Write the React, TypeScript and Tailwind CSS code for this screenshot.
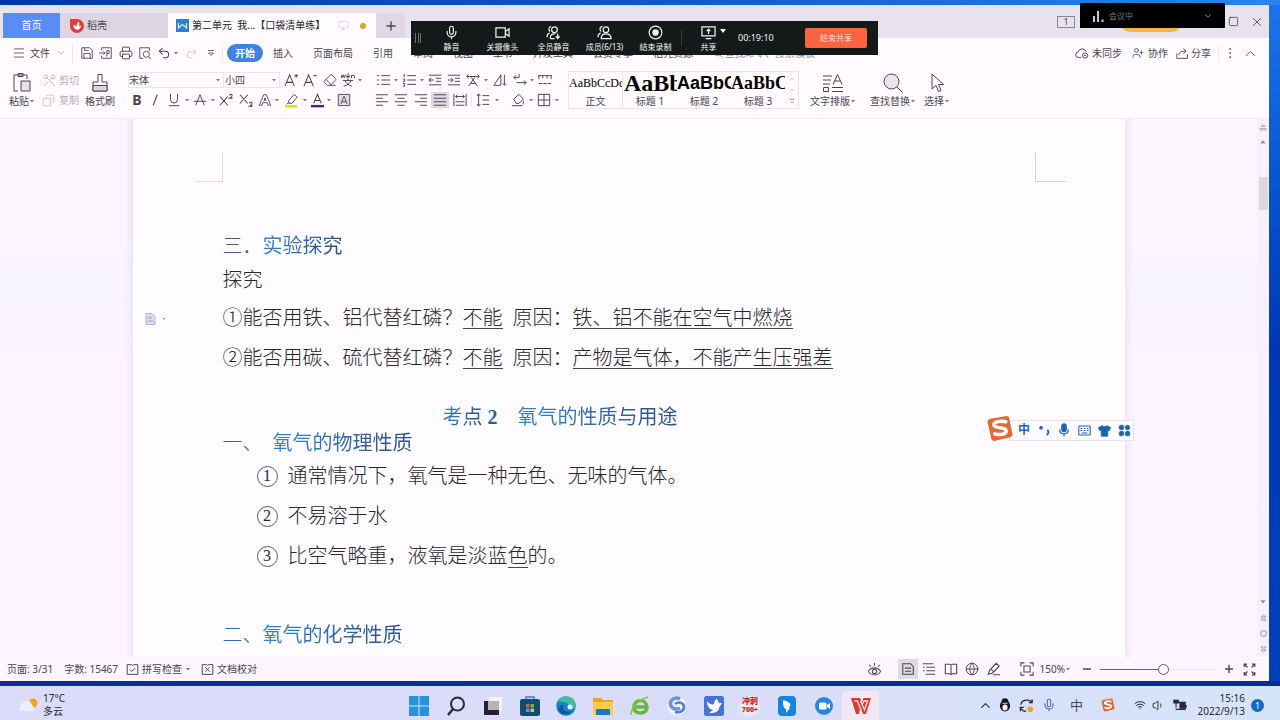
import React, { type ReactNode } from "react";
import {
  Printer, Undo2, Redo2, Scissors, Copy, Eraser, Mic, Video, Users, ChevronDown, ChevronUp,
  Search, Square, X, Plus, Minus, EllipsisVertical, UserPlus,
  Globe, Wifi, Volume1, Menu, Monitor,
} from "lucide-react";

const UI = "font-['Noto_Sans','Noto_Sans_CJK_SC',sans-serif]";

type IconProps = { children: ReactNode; className?: string; box?: string; sw?: number };

function Icon({ children, className = "size-[15px]", box = "0 0 16 16", sw = 1 }: IconProps) {
  return (
    <svg viewBox={box} className={`shrink-0 ${className}`} fill="none" stroke="currentColor" strokeWidth={sw} aria-hidden="true">
      {children}
    </svg>
  );
}

function Caret({ className = "w-[6px]" }: { className?: string }) {
  return (
    <span className={`flex shrink-0 items-center justify-center ${className}`}>
      <svg viewBox="0 0 4 3" className="h-[3px] w-[4px]" aria-hidden="true"><path d="M0 0h4L2 2.6z" fill="#7d7784" /></svg>
    </span>
  );
}

function Tool({ label, className, children }: { label: string; className: string; children: ReactNode }) {
  return (
    <button type="button" aria-label={label} className={`flex h-4 shrink-0 items-center justify-center ${className}`}>
      {children}
    </button>
  );
}

function TitleBar() {
  return (
    <div className="flex h-[33px] items-end bg-[#e7e2ee] pl-[3px]">
      <button type="button" className="h-[25px] w-[57px] bg-[#5b8bf6] text-[10px] text-white">首页</button>
      <button type="button" className="flex h-[25px] w-[108px] items-center gap-[3px] bg-[#ddd6e2] pl-2.5 text-[10px]">
        <svg viewBox="0 0 14 14" className="size-[14px]" aria-hidden="true">
          <path d="M0 0h7a7 7 0 1 1-7 7z" fill="#e23b3b" />
          <path d="M7 11C4 10 3 8 3.500 5.500 5 6 6 7 6.500 8 6.500 5.500 7.500 3.500 9 2.500c.6 2 .5 3.500-.4 5 .8-.6 1.500-1 2.400-1-.2 2.500-1.500 4-4 4.500z" fill="#fff" />
        </svg>
        稻壳
      </button>
      <div className="flex h-[25px] w-[208px] items-center bg-[#fffbff] pr-2.5 pl-2 text-[10px] text-[#25202b]">
        <svg viewBox="0 0 13 13" className="mr-[3px] size-[13px]" aria-hidden="true">
          <path d="M0 0h13v13H0z" fill="#2e7fd9" />
          <path d="M2.500 4v5l4-3.500 4 3.500V4" fill="none" stroke="#d9ecff" strokeWidth="1.200" />
        </svg>
        <span className="whitespace-pre">第二单元  我...【口袋清单练】</span>
        <Monitor className="ml-auto size-[11px] text-[#cfc8d6]" strokeWidth={1.5} />
        <span className="ml-[11px] size-[6px] rounded-full bg-[#d9a03c]" />
      </div>
      <button type="button" aria-label="新建标签" className="flex h-[25px] w-[29px] items-center justify-center bg-[#dfd9e6]">
        <Plus className="size-[14px]" strokeWidth={2.4} />
      </button>
      <div className="ml-auto flex h-[33px] items-center">
        <span className="flex h-3 w-[18px] items-center justify-center border border-[#8a8492] text-[9px] leading-none">1</span>
        <button type="button" aria-label="登录" className="mt-[2px] mr-[40px] ml-[46px] h-[18px] w-[60px] rounded-full bg-[#f4b64c]" />
        <button type="button" aria-label="还原" className="flex w-6 justify-center"><Square className="size-[11px]" strokeWidth={1.8} /></button>
        <button type="button" aria-label="关闭" className="flex w-6 justify-center"><X className="size-[14px]" strokeWidth={1.5} /></button>
      </div>
    </div>
  );
}

function MenuRow() {
  return (
    <nav className="flex h-[30px] items-center text-[10px] whitespace-nowrap">
      <button type="button" className="ml-3 flex items-center gap-1">
        <Menu className="size-[14px]" strokeWidth={1.4} />文件
        <ChevronDown className="ml-[2px] size-[10px] text-[#a9a2b0]" strokeWidth={1.8} />
      </button>
      <span className="ml-[6px] h-5 w-px bg-[#eee6f0]" />
      <div className="ml-[5px] flex items-center">
        <Tool label="保存" className="w-[18px]"><Icon className="size-[14px]"><path d="M2 2h9l3 3v9H2zM4.500 14V8.500h7V14M5 2v3h5" /></Icon></Tool>
        <Tool label="输出为PDF" className="w-[20px]"><Icon className="size-[14px]"><path d="M3 5V2h11v12H3v-3M0 8h7M5 6l2 2-2 2M9 12V5h2.500v3.500H9" /></Icon></Tool>
        <Tool label="打印" className="w-[19px]"><Printer className="size-[14px]" strokeWidth={1.6} /></Tool>
        <Tool label="打印预览" className="w-[20px]"><Icon className="size-[14px]"><path d="M6 14H2V2h11v4" /><circle cx="9.500" cy="9.500" r="3.500" /><path d="m12 12 2.500 3" /></Icon></Tool>
        <Tool label="撤销" className="w-[18px]"><Undo2 className="size-[14px]" strokeWidth={1.8} /></Tool>
        <Caret />
        <Tool label="恢复" className="w-[24px] text-[#cfc8d2]"><Redo2 className="size-[13px]" strokeWidth={1.8} /></Tool>
        <Tool label="自定义快速访问" className="w-[16px]"><Icon className="size-[8px]" sw={1.6}><path d="M2 3h12M3 8l5 5 5-5z" /></Icon></Tool>
      </div>
      <span className="ml-[3px] h-5 w-px bg-[#eee6f0]" />
      <button type="button" className="ml-1 h-[18px] w-9 rounded-full bg-[#4082e2] font-bold text-white">开始</button>
      <div className="ml-2.5 flex items-center gap-5">
        <button type="button">插入</button>
        <button type="button">页面布局</button>
        <button type="button">引用</button>
        <button type="button">审阅</button>
        <button type="button">视图</button>
        <button type="button">章节</button>
        <button type="button">开发工具</button>
        <button type="button">会员专享</button>
        <button type="button">稻壳资源</button>
        <button type="button" className="flex items-center gap-[2px] text-[#8e8795]"><Search className="size-[10px]" />查找命令、搜索模板</button>
      </div>
      <div className="ml-auto flex items-center pr-2.5">
        <button type="button" className="flex items-center gap-[3px]">
          <Icon className="size-[14px]" sw={1.1}><path d="M7 13H4a3 3 0 0 1-.5-6A5 5 0 0 1 13 6.500" /><circle cx="11.500" cy="11" r="3" /><path d="M10 11h3" /></Icon>未同步
        </button>
        <button type="button" className="ml-2.5 flex items-center gap-1"><UserPlus className="size-[12px]" strokeWidth={1.5} />协作</button>
        <button type="button" className="ml-2 flex items-center gap-[2px]">
          <Icon className="size-[13px]" sw={1.1}><path d="M1 8v6h13V9M3 10c1-4 4-5 9-5M9 2l3.500 3L9 8" /></Icon>分享
        </button>
        <span className="ml-[7px] h-4 w-px bg-[#eee6f0]" />
        <EllipsisVertical className="ml-1 size-[14px]" strokeWidth={1.2} />
        <ChevronUp className="ml-[5px] size-[17px]" strokeWidth={1.2} />
      </div>
    </nav>
  );
}

function Lines({ d }: { d: string }) {
  return <Icon className="size-[14px]" sw={1.1}><path d={d} /></Icon>;
}

function StyleCard({ sample, name, className, active }: { sample: string; name: string; className: string; active?: boolean }) {
  return (
    <button type="button" className={`flex h-full w-[54px] shrink-0 flex-col items-center overflow-hidden ${active ? "border-r border-[#eadff0]" : ""}`}>
      <span className={`flex h-[23px] w-full items-center overflow-hidden whitespace-nowrap text-black ${className}`}>{sample}</span>
      <span className="text-[10px] leading-[14px]">{name}</span>
    </button>
  );
}

function Ribbon() {
  return (
    <div className="flex h-[50px] items-start text-[10px] whitespace-nowrap">
      <button type="button" className="ml-2 flex w-7 flex-col items-center pt-1">
        <Icon className="size-[22px]" box="0 0 22 22"><path d="M7 19H3V3h13v4M7 1.500h5v3H7z" /><path d="M10 9h9v10h-9z" fill="#e5e1ea" /></Icon>
        <span className="flex items-center leading-[15px]">粘贴<Caret /></span>
      </button>
      <div className="ml-[6px] flex w-[38px] flex-col text-[#b3acb8]">
        <button type="button" className="flex h-5 items-center gap-[2px] pt-1"><Scissors className="size-[15px] rotate-90" strokeWidth={1.2} />剪切</button>
        <button type="button" className="mt-[2px] flex h-5 items-center gap-1"><Copy className="size-[13px] rotate-90" strokeWidth={1.2} />复制</button>
      </div>
      <button type="button" className="ml-1 flex w-8 flex-col items-center pt-1">
        <Icon className="size-[22px]" box="0 0 22 22"><path d="M9 10V2.500h4V10h5v9H4v-9z" /><path d="M4 13.500h14V19H4z" fill="#dad6e0" /></Icon>
        <span className="leading-[15px]">格式刷</span>
      </button>

      <div className="ml-3 flex w-[236px] flex-col gap-1 pt-1">
        <div className="flex items-center">
          <div className="flex h-4 w-[152px] border border-[#eee3f2]">
            <label className="relative flex w-[94px] items-center">
              <select aria-label="字体" className="w-full appearance-none bg-transparent text-[10px] leading-[14px] outline-none"><option>宋体</option></select>
              <span className="pointer-events-none absolute right-[2px]"><Caret /></span>
            </label>
            <label className="relative flex flex-1 items-center border-l border-[#eee3f2]">
              <select aria-label="字号" className="w-full appearance-none bg-transparent pl-px text-[10px] leading-[14px] outline-none"><option>小四</option></select>
              <span className="pointer-events-none absolute right-[2px]"><Caret /></span>
            </label>
          </div>
          <Tool label="增大字号" className="ml-[2px] w-[18px]"><Icon className="size-[15px]" sw={1.1}><path d="M1 14 6 2l5 12M3 10h6M11 3h4M13 1v4" /></Icon></Tool>
          <Tool label="减小字号" className="w-5"><Icon className="size-[15px]" sw={1.1}><path d="M1 14 6 2l5 12M3 10h6M11 3h4" /></Icon></Tool>
          <Tool label="清除格式" className="w-5"><Eraser className="size-[14px]" strokeWidth={1.6} /></Tool>
          <Tool label="拼音指南" className="w-4">
            <Icon className="size-[14px]" sw={1.1}><path d="M0 2l1.200 3.500L2.500 2l1.200 3.500L5 2M6.500 4h3.200c0-2.600-3.200-2.600-3.200 0 0 2 2 2 3 1.300M8 1l1-1M12 6V2.500M12 4c0-2 3.500-2 3.500 0v2M2 8.500h12M8 7v1.500M4.500 8.500c1 3 4 5.500 8 6.500M11.500 8.500c-1 3-4 5.500-8.500 6.500" /></Icon>
          </Tool>
          <Caret className="w-2" />
        </div>
        <div className="flex items-center">
          <Tool label="加粗" className="w-[18px]"><b className="text-[14px] leading-none">B</b></Tool>
          <Tool label="倾斜" className="w-[18px]"><Icon className="size-[14px]" sw={1.2}><path d="M10.500 2 6 14" /></Icon></Tool>
          <Tool label="下划线" className="w-5"><Icon className="size-[14px]" sw={1.1}><path d="M4 1v6.500a4 4 0 0 0 8 0V1M2 14.500h12" /></Icon></Tool>
          <Caret />
          <Tool label="删除线" className="w-5"><Icon className="size-[14px]" sw={1.1}><path d="M3 14 8 2l5 12M1 9.500h14" /></Icon></Tool>
          <Caret />
          <Tool label="上标" className="w-5"><Icon className="size-[14px]" sw={1.2}><path d="M1 4l9 10M10 4 1 14M12 3c0-2 3-2 3 0 0 1.200-3 3-3 3h3.500" /></Icon></Tool>
          <Tool label="下标" className="w-5"><Icon className="size-[14px]" sw={1.2}><path d="M1 2l9 10M10 2 1 12M12 12c0-2 3-2 3 0 0 1.200-3 3-3 3h3.500" /></Icon></Tool>
          <Tool label="文字效果" className="w-[18px]"><Icon className="size-[14px]"><path d="M1.500 14 6.500 2h3l5 12h-3l-1-3h-5l-1 3zM7 8.500h2L8 5.500z" /></Icon></Tool>
          <Caret />
          <Tool label="突出显示" className="w-[22px]"><Icon className="size-[15px]"><path d="M5 8 11 1.500l3 3L8.500 11H5zM3 12l2-2" /><path d="M1 14.200h13" stroke="#e2dc35" strokeWidth="3" /></Icon></Tool>
          <Caret />
          <Tool label="字体颜色" className="w-[18px]"><Icon className="size-[15px]" sw={1.1}><path d="M4 11 8 1.500 12 11M5.500 8h5" /><path d="M1 14h14" stroke="#2f2a86" strokeWidth="2.600" /></Icon></Tool>
          <Caret />
          <Tool label="字符底纹" className="w-6"><Icon className="size-[14px]"><path d="M1.500 1.500h13v13h-13z" fill="#dedae4" /><path d="M4.500 12.500 8 3.500l3.500 9M5.500 10h5" /></Icon></Tool>
        </div>
      </div>

      <div className="ml-[9px] flex w-[187px] flex-col gap-1 pt-1">
        <div className="flex items-center">
          <Tool label="项目符号" className="w-5"><Lines d="M6 3h10M6 8h10M6 13h10M1 3h2.500M1 8h2.500M1 13h2.500" /></Tool>
          <Caret />
          <Tool label="编号" className="w-5"><Lines d="M6 3h10M6 8h10M6 13h10M2.500 1v4M1 7h2v2.500H1M1 12h2v3H1" /></Tool>
          <Caret />
          <Tool label="减少缩进" className="w-5"><Lines d="M1 2.500h14M9 6h6M9 9.500h6M1 13.500h14M7 8H1M3.500 5.500 1 8l2.500 2.500" /></Tool>
          <Tool label="增加缩进" className="w-[18px]"><Lines d="M1 2.500h14M9 6h6M9 9.500h6M1 13.500h14M1 8h6M4.500 5.500 7 8l-2.500 2.500" /></Tool>
          <Tool label="中文版式" className="w-5"><Lines d="M1 4h14M3 1.500 .8 4 3 6M13 1.500 15.200 4 13 6M3 15l7-10M13 15 6 5M5 12h6" /></Tool>
          <Caret />
          <Tool label="排序" className="w-[22px]"><Lines d="M1 14 9 2v12zM13 2v12M11 12l2 2 2-2" /></Tool>
          <Tool label="显示标记" className="w-[18px]"><Lines d="M7 1v4H1M3.500 2.500 1 5l2.500 2.500M4 11h11M12.500 8.500 15 11l-2.500 2.500" /></Tool>
          <Caret />
          <Tool label="制表位" className="w-5"><Lines d="M0 3h16M1 3v4M5.500 3v3M10.500 3v3M15 3v4M1 12h4M6 12h4M11 12h4" /></Tool>
        </div>
        <div className="flex items-center">
          <Tool label="左对齐" className="w-[18px]"><Lines d="M1 2h14M1 6h8M1 10h14M1 14h8" /></Tool>
          <Tool label="居中" className="w-5"><Lines d="M1 2h14M4 6h8M1 10h14M4 14h8" /></Tool>
          <Tool label="右对齐" className="w-5"><Lines d="M1 2h14M7 6h8M1 10h14M7 14h8" /></Tool>
          <Tool label="两端对齐" className="w-[18px] bg-[#dcd7e2]"><Lines d="M1 2h14M1 6h14M1 10h14M1 14h14" /></Tool>
          <Tool label="分散对齐" className="w-[22px]"><Lines d="M1 1v14M15 1v14M3 4h10M3 10h10M3 14h10M5 2 3 4l2 2M11 2l2 2-2 2" /></Tool>
          <span className="h-3 w-px bg-[#eee3f2]" />
          <Tool label="行距" className="w-[22px]"><Lines d="M3 1v14M1 3.500 3 1l2 2.500M1 12.500 3 15l2-2.500M7.500 3H15M7.500 8H15M7.500 13H15" /></Tool>
          <Caret />
          <Tool label="底纹颜色" className="ml-2 w-5"><Lines d="M3 7 9 1.500 14 7l-5 5H6zM1 14.500h12M14 9v4" /></Tool>
          <Caret />
          <Tool label="边框" className="w-5"><Lines d="M1.500 1.500h13v13h-13zM8 1.500v13M1.500 8h13" /></Tool>
          <Caret />
        </div>
      </div>

      <div className="mt-[3px] ml-2 flex h-[38px] w-[231px] border border-[#eee3f2]">
        <StyleCard sample="AaBbCcDd" name="正文" active className="font-['Liberation_Serif',serif] text-[12px]" />
        <StyleCard sample="AaBb" name="标题 1" className="pl-px font-['Liberation_Serif',serif] text-[24px] font-bold" />
        <StyleCard sample="AaBbC" name="标题 2" className="font-['Liberation_Sans',sans-serif] text-[18px] font-bold" />
        <StyleCard sample="AaBbC" name="标题 3" className="font-['Liberation_Serif',serif] text-[18px] font-bold" />
        <div className="flex flex-1 flex-col items-center justify-around py-[2px] text-[#8e8795]">
          <ChevronUp className="size-[6px]" /><ChevronDown className="size-[6px]" />
          <Icon className="size-[6px]" sw={2}><path d="M2 4h12M3 9l5 4 5-4" /></Icon>
        </div>
      </div>

      <button type="button" className="ml-2.5 flex w-[48px] flex-col items-center pt-1">
        <Icon className="size-[22px]" box="0 0 22 22"><path d="M1 4h9M1 8h8M1 12h7M1.500 15.500h5v4h-5zM10 15.500h11M10 19.500h11M11 12.500l4.500-10 4.500 10M12.500 9h6" /></Icon>
        <span className="flex items-center leading-[15px]">文字排版<Caret /></span>
      </button>
      <button type="button" className="ml-[11px] flex w-[50px] flex-col items-center pt-1">
        <Icon className="size-[22px]" box="0 0 22 22"><circle cx="9.500" cy="9.500" r="7.500" fill="#e9e5ed" /><path d="m15 15 5.500 5.500" /></Icon>
        <span className="flex items-center leading-[15px]">查找替换<Caret /></span>
      </button>
      <button type="button" className="ml-[5px] flex w-[28px] flex-col items-center pt-1">
        <Icon className="size-[22px]" box="0 0 22 22"><path d="M6 2v15l4-3.500 2.500 6 2.500-1-2.500-6h5z" /></Icon>
        <span className="flex items-center leading-[15px]">选择<Caret /></span>
      </button>
    </div>
  );
}

function MeetingButton({ label, children }: { label: string; children: ReactNode }) {
  return (
    <button type="button" className="flex w-[51px] flex-col items-center gap-px">
      {children}
      <span className="text-[8px] leading-[11px]">{label}</span>
    </button>
  );
}

function MeetingBar() {
  return (
    <div className="absolute top-[21px] left-[411px] flex h-[34px] w-[467px] items-center bg-[#131a19] whitespace-nowrap text-[#f4f4f4]">
      <div className="ml-1 flex h-2.5 w-[6px] justify-between">
        <span className="w-px bg-[#6c7271]" /><span className="w-px bg-[#6c7271]" /><span className="w-px bg-[#6c7271]" />
      </div>
      <div className="ml-[5px] flex">
        <MeetingButton label="静音"><Mic className="size-[15px]" strokeWidth={1.9} /></MeetingButton>
        <MeetingButton label="关摄像头">
          <Icon className="size-[15px]" sw={1.3}><path d="M1 3h10v10H1zM11 7l4-3v8l-4-3" /></Icon>
        </MeetingButton>
        <MeetingButton label="全员静音">
          <Icon className="size-[15px]" sw={1.3}><circle cx="9" cy="5" r="3" /><path d="M5.500 1.500A3 3 0 0 0 4.500 7M1 13c0-2.500 1-4 3-4.500M4.500 14.500c0-3.500 2-5 4.500-5h1M4.500 14.500H9M12.500 9v5.500M10.500 12l2 2.500 2-2.500" /></Icon>
        </MeetingButton>
        <MeetingButton label="成员(6/13)">
          <Icon className="size-[15px]" sw={1.3}><circle cx="9.500" cy="5" r="3" /><path d="M6 1.500A3 3 0 0 0 4.500 7M1 13c0-2.500 1-4 3-4.500M4.500 14.500c0-3.500 2-5 5-5s5.500 1.500 5.500 5z" /></Icon>
        </MeetingButton>
        <MeetingButton label="结束录制">
          <Icon className="size-[15px]" sw={1.2}><circle cx="8" cy="8" r="6.800" /><circle cx="8" cy="8" r="2.800" fill="currentColor" /></Icon>
        </MeetingButton>
      </div>
      <span className="h-4 w-px bg-[#343b3a]" />
      <div className="relative ml-px flex">
        <MeetingButton label="共享">
          <Icon className="size-[15px]" sw={1.3}><path d="M1 2h14v9.500H1zM5 14.500h6M8 9.500V4.500M6 6.500l2-2 2 2" /></Icon>
        </MeetingButton>
        <svg viewBox="0 0 6 4" className="absolute top-1 right-[8px] h-[4px] w-[6px]" aria-hidden="true"><path d="M0 0h6L3 4z" fill="#fff" /></svg>
      </div>
      <time className="ml-1 text-[9px]">00:19:10</time>
      <button type="button" className="mr-[11px] ml-auto h-5 w-[62px] rounded-[2px] bg-[#fc6340] text-[8px] text-[#ffe0d8]">结束共享</button>
    </div>
  );
}

function SpeakerPanel() {
  return (
    <div className="absolute top-[3px] right-[55px] flex h-[25px] w-[145px] items-center bg-black text-[8px] text-[#77777c]">
      <svg viewBox="0 0 12 12" className="ml-3 size-[12px]" aria-hidden="true"><path d="M1 6h2v6H1zM5 1h2v11H5zM9.500 9.500h2V12h-2z" fill="#c9c9cc" /></svg>
      <span className="ml-[5px]">会议中</span>
      <ChevronDown className="mr-3 ml-auto size-[10px] text-[#a8a8ac]" />
    </div>
  );
}

function Circled({ n }: { n: number }) {
  return (
    <span className="flex size-[21px] shrink-0 items-center justify-center rounded-full border border-[#5a525f] font-['Liberation_Serif',serif] text-[16px] leading-none font-normal">
      {n}
    </span>
  );
}

function Answer({ children }: { children: ReactNode }) {
  return <span className="border-b border-[#4a4350] leading-5">{children}</span>;
}

function Blue({ children }: { children: ReactNode }) {
  return <span className="bg-linear-to-r from-[#3385c2] to-[#2f4f80] bg-clip-text font-normal text-transparent">{children}</span>;
}

function Paper() {
  return (
    <article className="relative h-full w-[992px] bg-[#fefcff] pt-[34px] font-['Liberation_Serif','Noto_Sans_CJK_SC',serif] text-[20px] font-light whitespace-nowrap text-[#2b2530] shadow-[0_0_6px_3px_#ece4f1]">
      <div className="flex h-[29px] justify-between pr-[59px] pl-[62px]">
        <span className="w-[28px] border-r border-b border-[#e4dae6]" />
        <span className="w-[31px] border-b border-l border-[#d8d0da]" />
      </div>
      <div className="px-[90px] pt-12">
        <h2 className="flex h-8 items-center"><span className="text-[#4c5a80]">三．</span><Blue>实验探究</Blue></h2>
        <p className="flex h-9 items-center">探究</p>
        <div className="relative">
          <svg viewBox="0 0 20 12" className="absolute top-[15px] left-[-78px] h-3 w-5" aria-hidden="true">
            <path d="M1 .5h6l3 3v8H1z" fill="#dcdaf0" stroke="#b6b3d3" /><path d="M3 5h4M3 8h5" stroke="#a09ec4" /><path d="M17.500 5h3L19 7z" fill="#9b97b8" />
          </svg>
          <p className="flex h-10 items-center">①能否用铁、铝代替红磷？<Answer>不能</Answer><span className="ml-2.5">原因：</span><Answer>铁、铝不能在空气中燃烧</Answer></p>
        </div>
        <p className="flex h-10 items-center">②能否用碳、硫代替红磷？<Answer>不能</Answer><span className="ml-2.5">原因：</span><Answer>产物是气体，不能产生压强差</Answer></p>
        <h1 className="mt-[26px] flex h-[26px] items-center pl-[220px]">
          <Blue>考点</Blue><span className="mx-[5px] font-bold text-[#2d5f8e]">2</span><span className="ml-[15px]"><Blue>氧气的性质与用途</Blue></span>
        </h1>
        <h2 className="flex h-[26px] items-center"><span className="text-[#4c5a80]">一、</span><span className="ml-2.5"><Blue>氧气的物理性质</Blue></span></h2>
        <ol className="pl-[34px]">
          <li className="flex h-10 items-center gap-2.5"><Circled n={1} />通常情况下，氧气是一种无色、无味的气体。</li>
          <li className="flex h-10 items-center gap-2.5"><Circled n={2} />不易溶于水</li>
          <li className="flex h-10 items-center gap-2.5"><Circled n={3} /><span>比空气略重，液氧是淡蓝<Answer>色</Answer>的。</span></li>
        </ol>
        <h2 className="mt-[43px] flex h-8 items-center"><span className="text-[#3d6a96]">二、</span><Blue>氧气的化学性质</Blue></h2>
      </div>
    </article>
  );
}

function Scroller() {
  return (
    <div className="flex w-3 shrink-0 flex-col items-center bg-[#f7f0fa] pt-1 pb-1 text-[#8e8795]">
      <Icon className="size-[8px]" sw={1.4}><path d="M4 7 8 3l4 4zM1 11h14M1 14h14" /></Icon>
      <Icon className="mt-2 size-[6px]"><path d="m2 11 6-7 6 7z" fill="currentColor" /></Icon>
      <span className="mt-8 h-[33px] w-[9px] bg-[#dcd6e0]" />
      <div className="mt-auto flex flex-col items-center gap-[9px]">
        <Icon className="size-[6px]"><path d="m2 4 6 7 6-7z" fill="currentColor" /></Icon>
        <Icon className="size-[7px]" sw={1.6}><path d="m2 7 6-5 6 5zM2 14l6-5 6 5z" /></Icon>
        <Icon className="size-[7px]" sw={2}><rect x="2" y="2" width="12" height="12" rx="3" /></Icon>
        <Icon className="size-[7px]" sw={1.6}><path d="m2 2 6 5 6-5zM2 9l6 5 6-5z" /></Icon>
      </div>
    </div>
  );
}

function StatusBar() {
  return (
    <footer className="flex h-6 items-center bg-[#fdf6ff] text-[10px] whitespace-nowrap">
      <span className="ml-[7px]">页面: 3/31</span>
      <span className="ml-[11px]">字数: 15467</span>
      <button type="button" className="ml-2 flex items-center gap-[3px]">
        <Icon className="size-[13px]" sw={1.2}><path d="M1.500 2h5L8 3l1.500-1h5v12h-13zM5 8l2 2.500L11.500 6" /></Icon>拼写检查<Caret />
      </button>
      <button type="button" className="ml-2.5 flex items-center gap-[3px]">
        <Icon className="size-[13px]" sw={1.2}><path d="M1.500 2h5L8 3l1.500-1h5v12h-13zM5.500 5.500l5 5M10.500 5.500l-5 5" /></Icon>文档校对
      </button>
      <div className="mr-2.5 ml-auto flex items-center">
        <Tool label="护眼模式" className="w-5"><Icon className="size-[15px]" sw={1.1}><path d="M1.500 10C4 5 12 5 14.500 10 12 15 4 15 1.500 10zM8 1v3M2.500 3l1.500 2M13.500 3 12 5" /><circle cx="8" cy="10" r="2.300" /></Icon></Tool>
        <div className="ml-[13px] flex h-5 w-5 items-center justify-center bg-[#dedae3]">
          <Tool label="页面视图" className="w-5"><Icon className="size-[14px]" sw={1.2}><path d="M2 2h9l3 3v9H2zM4.500 7h7M4.500 10.500h7" /></Icon></Tool>
        </div>
        <Tool label="大纲" className="w-[23px]"><Lines d="M1 2h12M5 6h10M5 10h10M4 14h11M1 6h2M1 10h2" /></Tool>
        <Tool label="阅读版式" className="w-5"><Icon className="size-[14px]" sw={1.2}><path d="M1.500 2.500h5L8 3.500l1.500-1h5v11h-5L8 14.500l-1.500-1h-5zM8 3.500v11" /></Icon></Tool>
        <Tool label="Web版式" className="w-[22px]"><Globe className="size-[14px]" strokeWidth={1.6} /></Tool>
        <Tool label="写作模式" className="w-[22px]"><Icon className="size-[14px]" sw={1.2}><path d="M1.500 14 3 9.500 10.500 1.500l3.500 3L6.500 12.500zM5 8.500l3 3M7 14.500h8" /></Icon></Tool>
        <Tool label="最佳显示比例" className="ml-3 w-5"><Icon className="size-[14px]" sw={1.2}><path d="M1 5V1h4M11 1h4v4M15 11v4h-4M5 15H1v-4M4.500 4.500h7v7h-7z" /></Icon></Tool>
        <span className="ml-[3px]">150%</span>
        <Caret />
        <Tool label="缩小" className="ml-[6px] w-5"><Minus className="size-[12px]" strokeWidth={2.8} /></Tool>
        <input
          type="range" min="0" max="100" defaultValue="56" aria-label="缩放"
          className="ml-[3px] h-3 w-[115px] appearance-none bg-linear-to-r from-[#6b6572] from-55% to-[#eae3ee] to-55% bg-[length:100%_1px] bg-center bg-no-repeat [&::-webkit-slider-thumb]:size-[11px] [&::-webkit-slider-thumb]:appearance-none [&::-webkit-slider-thumb]:rounded-full [&::-webkit-slider-thumb]:border [&::-webkit-slider-thumb]:border-[#5d5764] [&::-webkit-slider-thumb]:bg-[#fffaff]"
        />
        <Tool label="放大" className="ml-1 w-5"><Plus className="size-[12px]" strokeWidth={2.8} /></Tool>
        <Tool label="全屏" className="w-5"><Icon className="size-[13px]" sw={1.5}><path d="M1.500 5V1.500H5M1.500 1.500l4 4M11 1.500h3.500V5M14.500 1.500l-4 4M14.500 11v3.500H11M14.500 14.500l-4-4M5 14.500H1.500V11M1.500 14.500l4-4" /></Icon></Tool>
      </div>
    </footer>
  );
}

function SogouMark({ className }: { className: string }) {
  return (
    <svg viewBox="0 0 26 28" className={`shrink-0 ${className}`} aria-hidden="true">
      <path d="M3 4 20 1q2 0 2.500 2L26 20q0 2-2 3L7 27q-2 0-3-2L0 7q0-2 3-3z" fill="#dd6c38" />
      <path d="M19 7C13 5.500 7 7 6.500 10c0 4.500 13 2 13 6.500C19 20.500 12 21 7.500 19.500" fill="none" stroke="#fff" strokeWidth="3.600" strokeLinecap="round" />
    </svg>
  );
}

function InputMethodBar() {
  return (
    <div className="absolute top-[415px] left-[987px] flex h-[27px] items-center text-[#1f62ad]">
      <SogouMark className="relative z-10 h-[27px] w-[26px]" />
      <div className="mt-[3px] -ml-1 flex h-[21px] w-[125px] items-center border border-[#e9e1ee] bg-[#fefcff] pl-1">
        <Tool label="中文" className="w-5"><b className="text-[12px] leading-none">中</b></Tool>
        <Tool label="标点" className="w-5"><Icon className="size-[12px]"><circle cx="4" cy="5" r="2" fill="currentColor" /><path d="M12 8.500a2 2 0 0 1 2 2c0 2-1 3-2.500 4" strokeWidth="2.500" /></Icon></Tool>
        <Tool label="语音" className="w-5"><Icon className="size-[14px]" sw={1.4}><rect x="5.500" y="1" width="5" height="9" rx="2.500" fill="currentColor" /><path d="M3 7.500c0 6.500 10 6.500 10 0M8 12.500V15" /></Icon></Tool>
        <Tool label="软键盘" className="w-5"><Icon className="size-[13px]" sw={1.3}><rect x="1" y="2.500" width="14" height="11" rx="1" /><path d="M3 5.500h2M7 5.500h2M11 5.500h2M3 8h2M7 8h2M11 8h2M4.500 11h7" /></Icon></Tool>
        <Tool label="皮肤" className="w-5"><Icon className="size-[13px]"><path d="M5 2c1 1.500 5 1.500 6 0l4.500 2.500-2 4-1.500-.8V15H4V7.700l-1.500.8-2-4z" fill="currentColor" /></Icon></Tool>
        <Tool label="工具箱" className="w-5"><Icon className="size-[13px]"><g fill="currentColor"><rect x="1.500" y="1.500" width="5.500" height="5.500" rx="2" /><circle cx="11.700" cy="4.300" r="2.700" /><rect x="1.500" y="9" width="5.500" height="5.500" rx="2" /><rect x="9" y="9" width="5.500" height="5.500" rx="2" /></g></Icon></Tool>
      </div>
    </div>
  );
}

function AppIcon({ label, children, active }: { label: string; children: ReactNode; active?: boolean }) {
  return (
    <button type="button" aria-label={label} className={`flex h-[30px] items-center justify-center ${active ? "rounded-[3px] bg-[#f2e6f4]" : ""}`}>
      <svg viewBox="0 0 20 20" className="size-5" aria-hidden="true">{children}</svg>
    </button>
  );
}

function Taskbar() {
  return (
    <div className="flex h-[34px] items-center bg-linear-to-r from-[#dcdcfa] via-[#d9dcf8] to-[#d6e4fa] text-[10px] whitespace-nowrap text-[#2b2833]">
      <div className="flex flex-1 items-center pt-1 pl-4">
        <svg viewBox="0 0 22 16" className="ml-[2px] h-4 w-[22px]" aria-hidden="true">
          <circle cx="15" cy="6" r="4.500" fill="#f0a51e" />
          <path d="M1 13C2 8 7 2 11 4c3 1.500 2 4 5 6 1 2 0 4-2 4H3q-2 0-2-1z" fill="#e9effb" />
        </svg>
        <span className="ml-[3px] flex flex-col leading-[13px]"><span>17°C</span><span>多云</span></span>
      </div>
      <div className="grid w-[478px] grid-cols-13 pt-[6px]">
        <AppIcon label="开始菜单"><path d="M0 0h9.500v9.500H0zM10.500 0H20v9.500h-9.500zM0 10.500h9.500V20H0zM10.500 10.500H20V20h-9.500z" fill="#2493dc" /></AppIcon>
        <AppIcon label="搜索"><circle cx="11.500" cy="8" r="6.500" fill="none" stroke="#272832" strokeWidth="2" /><path d="m7 13-5 6" stroke="#272832" strokeWidth="2.400" /></AppIcon>
        <AppIcon label="任务视图"><path d="M6 1h13v14H6z" fill="#f5f1f6" /><path d="M1 5h4v9h11v5H1z" fill="#24222b" /><path d="M5 5h11v9H5z" fill="#b6b2bd" /></AppIcon>
        <AppIcon label="应用商店"><path d="M6 4V1h8v3" fill="none" stroke="#3285bc" strokeWidth="1.500" /><rect x="0" y="3" width="20" height="17" rx="2" fill="#134b77" /><path d="M6 8h3.500v3.500H6z" fill="#e45a43" /><path d="M10.500 8H14v3.500h-3.500z" fill="#71b943" /><path d="M6 12.500h3.500V16H6z" fill="#3aa5e8" /><path d="M10.500 12.500H14V16h-3.500z" fill="#f2bd38" /></AppIcon>
        <AppIcon label="Edge"><circle cx="10" cy="10" r="9.800" fill="#1583c9" /><path d="M2 5C7-2 19-1 19.800 9c0 4-3 5-6 4-2-1 0-2-1-4C10 5 5 6 2 5z" fill="#42bf98" /><path d="M8 9c-3 4 1 8 8 6-3 4-11 5-13-1-1-4 2-5 5-5z" fill="#0e569c" /><circle cx="14" cy="11" r="2.500" fill="#e3effb" /></AppIcon>
        <AppIcon label="文件资源管理器"><path d="M0 2h8l2 2h10v5H0z" fill="#e8a328" /><path d="M0 6h20v13H0z" fill="#f9cc4c" /><path d="M3 14q0-1 1-1h12q1 0 1 1v5H3z" fill="#1d78b9" /></AppIcon>
        <AppIcon label="360浏览器"><path d="M17 13c-3 6-13 5-13-2 0-8 12-9 13 0H6" fill="none" stroke="#6bb53a" strokeWidth="3.400" /><path d="M1 19c0-7 7-15 17-18" fill="none" stroke="#84c44c" strokeWidth="1.600" /></AppIcon>
        <AppIcon label="搜狗浏览器"><circle cx="10" cy="10" r="9.500" fill="#edf3fd" /><path d="M13 3C7 0 2 5 4 10c1.500 3 5 4 9 2" fill="none" stroke="#6c93d9" strokeWidth="3.600" /><path d="M8 8c4-3 9-1 9 3 0 4-4 6-9 5" fill="none" stroke="#4c7fd6" strokeWidth="2.600" /></AppIcon>
        <AppIcon label="飞鸽"><rect width="20" height="20" rx="2.500" fill="#4474da" /><path d="M3 5c3 4 6 4 7 3 0-3 2-5 3-5l2 4 3 0c-2 3-3 4-3 6-2 4-6 4-10 4l4-3C5 13 3 10 3 5z" fill="#fff" /></AppIcon>
        <AppIcon label="冲刺700+">
          <circle cx="10" cy="10" r="10" fill="#f5e9ee" />
          <text x="10" y="8" textAnchor="middle" fontSize="8" fontWeight="900" fill="#c92b32">冲刺</text>
          <text x="10" y="16" textAnchor="middle" fontSize="7" fontWeight="900" fill="#c92b32">700+</text>
        </AppIcon>
        <AppIcon label="钉钉"><rect x="1" width="18" height="20" rx="4" fill="#1684e0" /><path d="M6 4c4 1 8 3 7.500 6l-2 1 1.500 1-4 5v-4C6 12 6 8 6 4z" fill="#fff" /></AppIcon>
        <AppIcon label="视频会议"><circle cx="10" cy="10" r="9" fill="#2a86dc" /><rect x="5" y="6.500" width="7.500" height="7" rx="1.500" fill="#fff" /><path d="m13 9 3-2v6l-3-2z" fill="#fff" /></AppIcon>
        <AppIcon label="WPS Office" active><path d="M0 2h9l2 5 1.500-5H20l-5 16h-3L9.500 11 8 18H5z" fill="#d23f2c" /><path d="M3.500 5h3l3 8M9.500 5l4 9 3-9h-3.500l-2 4" fill="none" stroke="#f7dfdc" strokeWidth="1.300" /></AppIcon>
      </div>
      <div className="flex flex-1 items-center justify-end pt-1 pr-4">
        <ChevronUp className="size-[15px]" strokeWidth={1.8} />
        <svg viewBox="0 0 14 16" className="ml-[6px] h-[14px] w-[12px]" aria-hidden="true"><ellipse cx="7" cy="9" rx="6" ry="6.500" fill="#17161b" /><circle cx="7" cy="4" r="4" fill="#17161b" /><ellipse cx="7" cy="11" rx="3" ry="3.500" fill="#f0eef6" /><path d="M4 6h6" stroke="#f0eef6" /></svg>
        <Icon className="ml-2 size-[15px]" sw={1.4}><path d="M2 7c1-6 10-6 12-2M14 1.500V5h-3.500M1.500 10c1 3 4 4.500 6 4M1.500 14v-4H5" /><circle cx="12" cy="12" r="3" fill="#eba32e" stroke="none" /></Icon>
        <Mic className="ml-2 size-[14px] text-[#476fa8]" strokeWidth={1.8} />
        <span className="ml-[14px] text-[13px] leading-none text-[#4c4855]">中</span>
        <SogouMark className="ml-[18px] h-[14px] w-[14px]" />
        <Wifi className="ml-[19px] size-[12px]" strokeWidth={2} />
        <Volume1 className="ml-[6px] size-[13px]" strokeWidth={1.7} />
        <Icon className="ml-[8px] size-[14px]" sw={1.3}><path d="M5 5h9v8H3M15 8v3" /><path d="M8 6.500h5v5H8zM1 2v3.500h5V2M3.500 5v6" fill="currentColor" /></Icon>
        <time className="ml-3 flex w-[46px] flex-col items-end text-[10px] leading-[13px]"><span>15:16</span><span>2022/9/13</span></time>
        <span className="ml-[6px] flex size-[13px] items-center justify-center rounded-full bg-[#126ac0] text-[9px] leading-none text-white">1</span>
      </div>
    </div>
  );
}

export default function App() {
  return (
    <div lang="zh-CN" className={`relative flex h-screen flex-col overflow-hidden bg-[#0a2f8c] ${UI} text-[#4a4450]`}>
      <div className="h-[5px] shrink-0 bg-linear-to-r from-[#0037a6] via-[#0f55cf] to-[#2c84f0]" />
      <main className="flex min-h-0 flex-1 bg-linear-to-b from-[#1c74ea] via-[#0038b4] to-[#0040b8]">
        <section className="flex min-w-0 flex-1 flex-col overflow-hidden bg-[#fffbff]">
          <TitleBar />
          <MenuRow />
          <Ribbon />
          <div className="flex min-h-0 flex-1 overflow-hidden border-t border-[#f3ebf5]">
            <div className="flex min-w-0 flex-1 justify-center bg-linear-to-b from-[#fcf5fe] from-22% via-[#f7f4ff] via-32% to-[#fcf4fe] to-45%">
              <Paper />
            </div>
            <Scroller />
          </div>
          <StatusBar />
        </section>
        <div className="w-[11px] shrink-0" />
      </main>
      <div className="h-[5px] shrink-0" />
      <Taskbar />
      <MeetingBar />
      <SpeakerPanel />
      <InputMethodBar />
    </div>
  );
}
